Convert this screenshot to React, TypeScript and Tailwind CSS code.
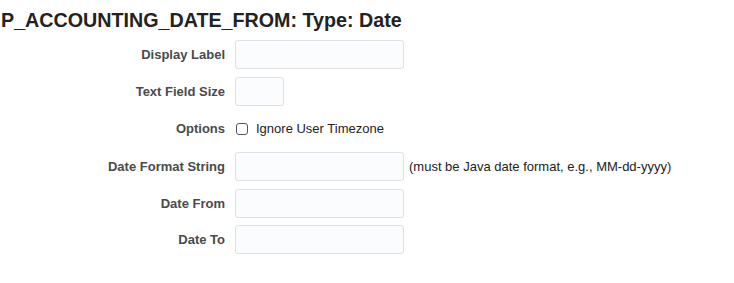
import React from 'react';

const Row = ({ label, children }: { label: string; children: React.ReactNode }) => (
  <div className="flex items-center">
    <div className="w-[235px] pr-[10px] text-right text-[13px] font-bold text-[#4a4a4a]">{label}</div>
    <div className="flex items-center">{children}</div>
  </div>
);

const Field = ({ w = 'w-[169px]' }: { w?: string }) => (
  <input className={`${w} h-[29px] rounded-[3px] border border-[#dfe1e3] bg-[#fbfcfd] outline-none`} />
);

export default function App() {
  return (
    <div className="w-[734px] h-[283px] bg-white font-['Liberation_Sans',Arial,sans-serif] text-[#222]">
      <h1 className="pt-[8px] pl-[1px] text-[19.7px] leading-[24px] font-bold text-[#222]">
        P_ACCOUNTING_DATE_FROM: Type: Date
      </h1>
      <div className="mt-[8px] flex flex-col">
        <Row label="Display Label">
          <Field />
        </Row>
        <div className="h-[8px]" />
        <Row label="Text Field Size">
          <Field w="w-[49px]" />
        </Row>
        <div className="h-[8px]" />
        <div className="h-[30px] flex items-center">
          <Row label="Options">
            <label className="flex items-center text-[13px] text-[#222]">
              <span className="ml-[1px] inline-block w-[12px] h-[12px] rounded-[3px] border border-[#555] bg-white" />
              <span className="ml-[8px]">Ignore User Timezone</span>
            </label>
          </Row>
        </div>
        <div className="h-[8px]" />
        <Row label="Date Format String">
          <Field />
          <span className="ml-[5px] text-[13px] text-[#222]">(must be Java date format, e.g., MM-dd-yyyy)</span>
        </Row>
        <div className="h-[8px]" />
        <Row label="Date From">
          <Field />
        </Row>
        <div className="h-[7px]" />
        <Row label="Date To">
          <Field />
        </Row>
      </div>
    </div>
  );
}
